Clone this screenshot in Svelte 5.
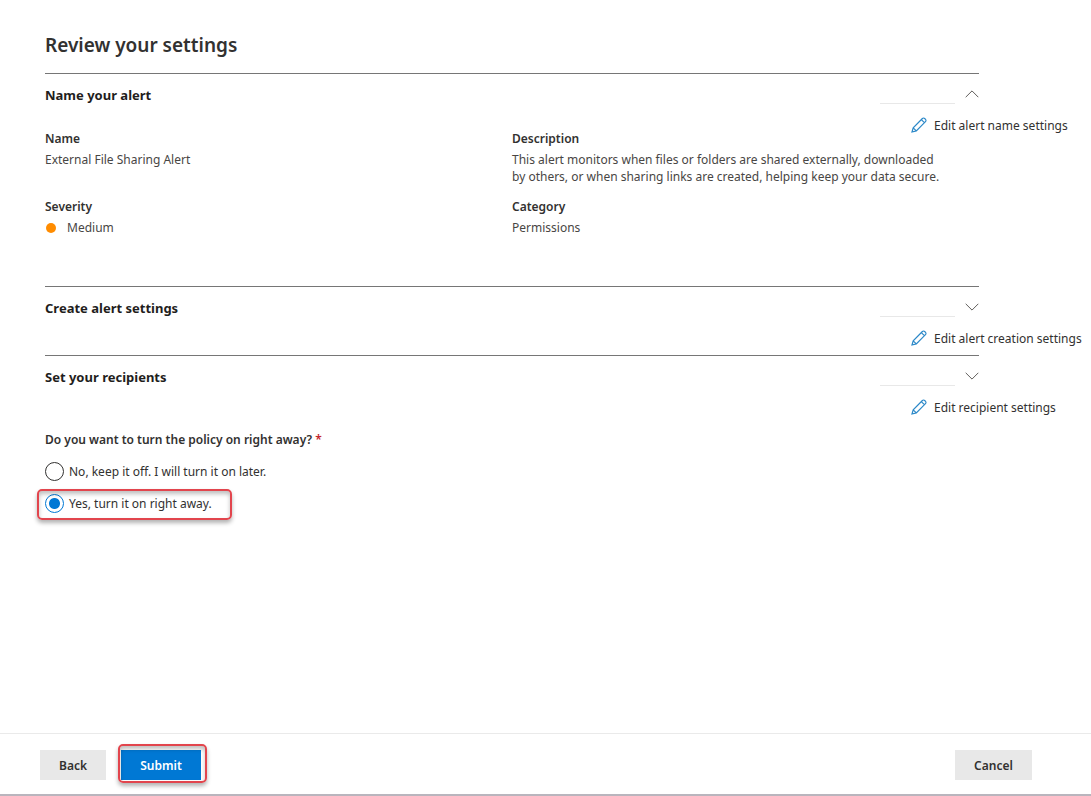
<script lang="ts">
  let turnOn = $state("yes");

  let sections = $state([
    { title: "Name your alert", edit: "Edit alert name settings", open: true },
    {
      title: "Create alert settings",
      edit: "Edit alert creation settings",
      open: false,
    },
    {
      title: "Set your recipients",
      edit: "Edit recipient settings",
      open: false,
    },
  ]);
</script>

{#snippet pencil()}
  <svg class="pencil" viewBox="0 0 16 16" aria-hidden="true">
    <path
      d="M1 15l1.2-4.2L11.4 1.5a1.6 1.6 0 0 1 2.3 0l.8.8a1.6 1.6 0 0 1 0 2.3L5.3 13.9zM10.3 2.6l3.1 3.1M2.2 10.8l3.1 3.1"
    />
  </svg>
{/snippet}

<div class="page">
  <main>
    <h1>Review your settings</h1>

    {#each sections as section, i}
      <section class:open={section.open}>
        <div class="header">
          <h2>{section.title}</h2>
          <span class="rule"></span>
          <button
            class="toggle"
            aria-label={section.title}
            aria-expanded={section.open}
            onclick={() => (section.open = !section.open)}
          >
            <svg viewBox="0 0 14 8" aria-hidden="true">
              <path
                d={section.open ? "M.7 7.2L7 .9l6.3 6.3" : "M.7.8L7 7.1 13.3.8"}
              />
            </svg>
          </button>
        </div>

        <div class="edit">
          <a href="#edit-{i}">{@render pencil()}{section.edit}</a>
        </div>

        {#if i === 0 && section.open}
          <dl>
            <div>
              <dt>Name</dt>
              <dd>External File Sharing Alert</dd>
            </div>
            <div>
              <dt>Description</dt>
              <dd>
                This alert monitors when files or folders are shared externally,
                downloaded by others, or when sharing links are created, helping
                keep your data secure.
              </dd>
            </div>
            <div>
              <dt>Severity</dt>
              <dd class="severity"><span class="dot"></span>Medium</dd>
            </div>
            <div>
              <dt>Category</dt>
              <dd>Permissions</dd>
            </div>
          </dl>
        {/if}
      </section>
    {/each}

    <fieldset>
      <legend>
        Do you want to turn the policy on right away? <span class="required"
          >*</span
        >
      </legend>
      <label>
        <input type="radio" name="policy" value="no" bind:group={turnOn} />
        No, keep it off. I will turn it on later.
      </label>
      <label class="marked">
        <input type="radio" name="policy" value="yes" bind:group={turnOn} />
        Yes, turn it on right away.
      </label>
    </fieldset>
  </main>

  <footer>
    <button class="btn">Back</button>
    <button class="btn primary marked">Submit</button>
    <button class="btn cancel">Cancel</button>
  </footer>
</div>

<style>
  :global(body) {
    margin: 0;
    background: #fff;
  }

  .page {
    display: flex;
    flex-direction: column;
    min-height: 100vh;
    font-family: "Noto Sans", "Open Sans", sans-serif;
    font-size: 12px;
    line-height: 17px;
    color: #323130;
  }

  main {
    flex: 1;
    padding: 32px 112px 32px 45px;
  }

  h1 {
    margin: 0 0 15px;
    font-size: 19px;
    line-height: 26px;
    font-weight: 600;
  }

  section {
    border-top: 1px solid #767676;
    padding-bottom: 8px;
  }

  section.open {
    padding-bottom: 50px;
  }

  .header {
    display: flex;
    align-items: flex-start;
    height: 43px;
  }

  h2 {
    flex: 1;
    margin: 0;
    font-size: 13px;
    line-height: 43px;
    font-weight: 700;
    color: #1f1e1d;
  }

  .rule {
    width: 75px;
    height: 29px;
    margin-right: 10px;
    border-bottom: 1px solid #e8e8e8;
  }

  .toggle {
    display: flex;
    align-items: center;
    width: 14px;
    height: 40px;
    padding: 0;
    border: 0;
    background: none;
    cursor: pointer;
  }

  .toggle svg {
    width: 14px;
    height: 8px;
    fill: none;
    stroke: #605e5c;
  }

  /* labels may run past the end of the section rule */
  .edit {
    width: 68px;
    margin-left: auto;
  }

  .edit a {
    display: flex;
    gap: 7px;
    width: max-content;
    color: #323130;
    text-decoration: none;
  }

  .pencil {
    width: 16px;
    height: 16px;
    fill: none;
    stroke: #2b88c8;
    stroke-width: 1.2;
  }

  dl {
    display: grid;
    grid-template-columns: 1fr 1fr;
    row-gap: 13px;
    margin: -4px 0 0;
  }

  dt {
    margin-bottom: 4px;
    font-weight: 600;
  }

  dd {
    margin: 0;
    padding-right: 32px;
    color: #484644;
  }

  .severity {
    display: flex;
    align-items: center;
  }

  .dot {
    width: 10px;
    height: 10px;
    margin: 0 11px 0 1px;
    border-radius: 50%;
    background: #ff8c00;
  }

  fieldset {
    margin: 7px 0 0;
    padding: 0;
    border: 0;
  }

  legend {
    margin-bottom: 7px;
    padding: 0;
    font-weight: 600;
  }

  .required {
    color: #c4262e;
  }

  label {
    display: flex;
    align-items: center;
    gap: 5px;
    width: max-content;
    height: 32px;
  }

  input {
    appearance: none;
    width: 19px;
    height: 19px;
    margin: 0;
    border: 1px solid #323130;
    border-radius: 50%;
    background: #fff;
  }

  input:checked {
    border-color: #0078d4;
    background: radial-gradient(circle, #0078d4 5px, #fff 6px);
  }

  .marked {
    position: relative;
  }

  .marked::after {
    content: "";
    position: absolute;
    inset: 2px -20px -1px -8px;
    border: 2px solid #e2454d;
    border-radius: 5px;
    box-shadow:
      0 3px 4px rgba(0, 0, 0, 0.3),
      inset 0 3px 4px rgba(0, 0, 0, 0.25);
    pointer-events: none;
  }

  footer {
    display: flex;
    gap: 15px;
    padding: 16px 59px 14px 40px;
    border-top: 1px solid #eaeaea;
    border-bottom: 2px solid #b9b5bd;
  }

  .btn {
    min-width: 66px;
    height: 30px;
    padding: 0 16px;
    border: 0;
    background: #e8e8e8;
    color: #323130;
    font-family: inherit;
    font-size: 12px;
    font-weight: 600;
    cursor: pointer;
  }

  .btn.primary {
    min-width: 80px;
    background: #0078d4;
    color: #fff;
  }

  .btn.marked::after {
    inset: -6px -6px -3px -3px;
  }

  .cancel {
    min-width: 77px;
    margin-left: auto;
  }
</style>
